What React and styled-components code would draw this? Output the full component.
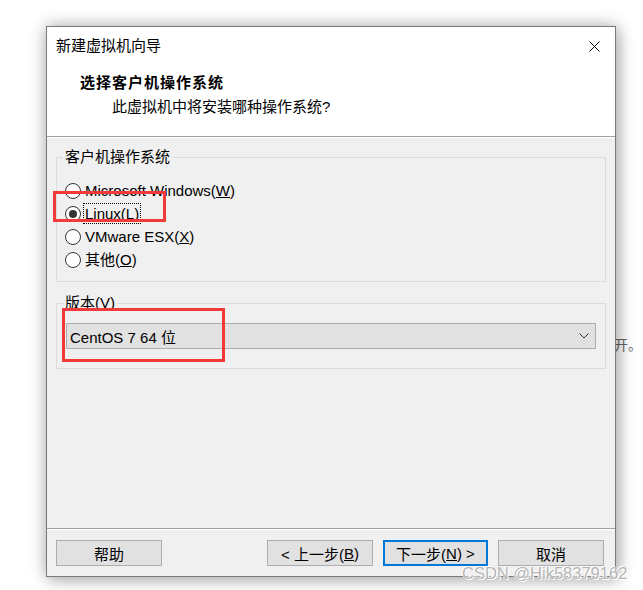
import styled, { createGlobalStyle } from "styled-components";

const GlobalStyle = createGlobalStyle`
  html, body {
    margin: 0;
    padding: 0;
    background: #fff;
  }
  body {
    font-family: "Liberation Sans", "Noto Sans CJK SC", sans-serif;
    color: #000;
  }
`;

const Stage = styled.div`
  position: relative;
  width: 643px;
  height: 590px;
  padding: 26px 0 0 46px;
  box-sizing: border-box;
  overflow: hidden;
`;

const Dialog = styled.div`
  position: relative;
  z-index: 1;
  width: 570px;
  height: 551px;
  box-sizing: border-box;
  border: 1px solid #7a7a7a;
  background: #f0f0f0;
  box-shadow: 0 0 16px rgba(0, 0, 0, 0.3), 4px 4px 14px rgba(0, 0, 0, 0.15);
  display: flex;
  flex-direction: column;
  font-size: 15px;
`;

const Header = styled.div`
  height: 109px;
  background: #fff;
  border-bottom: 1px solid #a0a0a0;
  box-shadow: 0 1px 0 #fff;
  display: flex;
  flex-direction: column;
`;

const TitleRow = styled.div`
  display: flex;
  align-items: center;
  justify-content: space-between;
  padding: 9px 15px 0 9px;
  height: 20px;
  line-height: 20px;
`;

const Close = styled.svg`
  width: 11px;
  height: 11px;
`;

const Heading = styled.div`
  margin: 17px 0 0 33px;
  font-weight: bold;
  letter-spacing: 1px;
  line-height: 20px;
`;

const Subtitle = styled.div`
  margin: 4px 0 0 65px;
  line-height: 20px;
`;

const Body = styled.div`
  flex: 1;
  padding: 10px 9px 0 9px;
`;

const Group = styled.fieldset`
  margin: ${(p) => (p.$first ? "0" : "11px 0 0 0")};
  padding: ${(p) => (p.$first ? "12px 9px 10px 8px" : "10px 9px 19px 9px")};
  border: 1px solid #dcdcdc;
  min-width: 0;
`;

const Legend = styled.legend`
  margin-left: ${(p) => (p.$first ? "-2px" : "-3px")};
  padding: 0 2px;
  line-height: 20px;
`;

const RadioRow = styled.label`
  display: flex;
  align-items: center;
  height: 23px;
  gap: 3px;
`;

const RadioDot = styled.span`
  width: 14px;
  height: 14px;
  border: 1px solid #333;
  border-radius: 50%;
  background: #fff;
  display: flex;
  align-items: center;
  justify-content: center;
  &::after {
    content: "";
    display: ${(p) => (p.$checked ? "block" : "none")};
    width: 8px;
    height: 8px;
    border-radius: 50%;
    background: #333;
  }
`;

const RadioText = styled.span`
  line-height: 19px;
  padding: 0 1px;
  outline: ${(p) => (p.$focus ? "1px dotted #000" : "none")};
`;

const Combo = styled.div`
  height: 26px;
  box-sizing: border-box;
  border: 1px solid #adadad;
  background: #e1e1e1;
  display: flex;
  align-items: center;
  justify-content: space-between;
  padding: 0 6px 0 3px;
`;

const Footer = styled.div`
  border-top: 1px solid #a0a0a0;
  box-shadow: inset 0 1px 0 #fff;
  padding: 11px 11px 10px 9px;
  display: flex;
  justify-content: space-between;
`;

const ButtonGroup = styled.div`
  display: flex;
  gap: 10px;
`;

const Button = styled.div`
  width: ${(p) => (p.$default ? "105px" : "106px")};
  height: 26px;
  box-sizing: border-box;
  border: ${(p) => (p.$default ? "2px solid #0078d7" : "1px solid #adadad")};
  background: #e1e1e1;
  display: flex;
  align-items: center;
  justify-content: center;
  white-space: pre;
`;

const Hotkey = styled.span`
  text-decoration: underline;
`;

const Marker = styled.div`
  position: absolute;
  z-index: 2;
  border: 3px solid #f23a3a;
  box-sizing: border-box;
  left: ${(p) => p.$x}px;
  top: ${(p) => p.$y}px;
  width: ${(p) => p.$w}px;
  height: ${(p) => p.$h}px;
`;

const BehindText = styled.div`
  position: absolute;
  z-index: 0;
  left: 614px;
  top: 334px;
  font-size: 14px;
  line-height: 20px;
  color: #666;
  font-family: "Noto Sans CJK SC", sans-serif;
`;

const Watermark = styled.div`
  position: absolute;
  z-index: 3;
  left: 462px;
  top: 562px;
  font-size: 16.5px;
  line-height: 22px;
  color: #b4b4b4;
  text-shadow: 0 0 1px #fff, 1px 1px 0 #fff, -1px -1px 0 #fff;
`;

const options = [
  { label: "Microsoft Windows", key: "W" },
  { label: "Linux", key: "L", checked: true },
  { label: "VMware ESX", key: "X" },
  { label: "其他", key: "O" },
];

export default function App() {
  return (
    <>
      <GlobalStyle />
      <Stage>
        <BehindText>开。</BehindText>
        <Dialog>
          <Header>
            <TitleRow>
              <span>新建虚拟机向导</span>
              <Close viewBox="0 0 11 11">
                <path d="M0.5 0.5 L10.5 10.5 M10.5 0.5 L0.5 10.5" stroke="#000" strokeWidth="1" fill="none" />
              </Close>
            </TitleRow>
            <Heading>选择客户机操作系统</Heading>
            <Subtitle>此虚拟机中将安装哪种操作系统?</Subtitle>
          </Header>

          <Body>
            <Group $first>
              <Legend $first>客户机操作系统</Legend>
              {options.map((o) => (
                <RadioRow key={o.key}>
                  <RadioDot $checked={o.checked} />
                  <RadioText $focus={o.checked}>
                    {o.label}(<Hotkey>{o.key}</Hotkey>)
                  </RadioText>
                </RadioRow>
              ))}
            </Group>

            <Group>
              <Legend>版本(V)</Legend>
              <Combo>
                <span>CentOS 7 64 位</span>
                <svg width="10" height="6" viewBox="0 0 10 6">
                  <path d="M0.5 0.5 L5 5 L9.5 0.5" stroke="#333" strokeWidth="1" fill="none" />
                </svg>
              </Combo>
            </Group>
          </Body>

          <Footer>
            <Button>帮助</Button>
            <ButtonGroup>
              <Button>
                {"< 上一步("}<Hotkey>B</Hotkey>)
              </Button>
              <Button $default>
                下一步(<Hotkey>N</Hotkey>{") >"}
              </Button>
              <Button>取消</Button>
            </ButtonGroup>
          </Footer>
        </Dialog>

        <Marker $x={53} $y={191} $w={113} $h={31} />
        <Marker $x={62} $y={308} $w={163} $h={54} />
        <Watermark>CSDN @Hik58379162</Watermark>
      </Stage>
    </>
  );
}
